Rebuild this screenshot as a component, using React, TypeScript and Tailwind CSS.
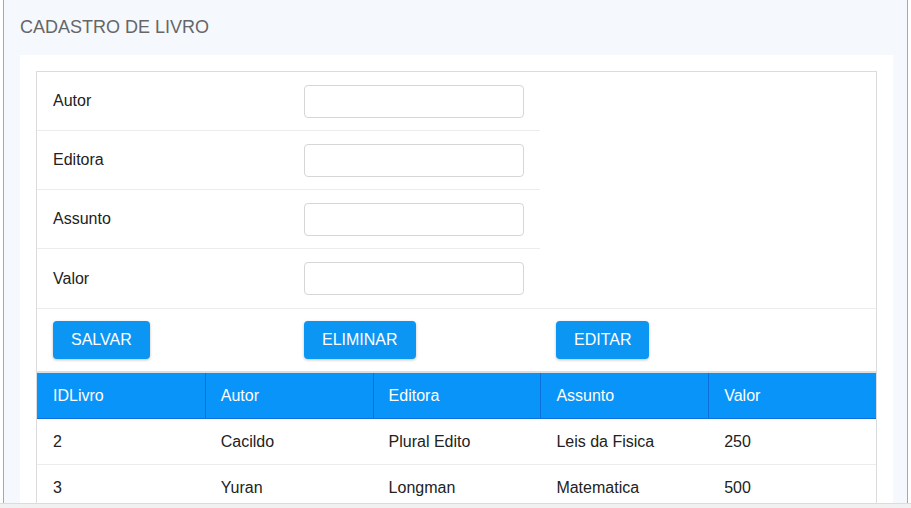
import React from "react";

interface Livro {
  id: number;
  autor: string;
  editora: string;
  assunto: string;
  valor: number;
}

const campos = ["Autor", "Editora", "Assunto", "Valor"];

const livros: Livro[] = [
  { id: 2, autor: "Cacildo", editora: "Plural Edito", assunto: "Leis da Fisica", valor: 250 },
  { id: 3, autor: "Yuran", editora: "Longman", assunto: "Matematica", valor: 500 },
];

const colunas = ["IDLivro", "Autor", "Editora", "Assunto", "Valor"];

const Botao = ({ children }: { children: React.ReactNode }) => (
  <button className="h-[38px] px-[18px] rounded-[4px] bg-[#0b96f3] text-white text-[16px] leading-none uppercase shadow-[0_1px_3px_rgba(0,0,0,0.25)]">
    {children}
  </button>
);

export default function App() {
  return (
    <div
      className="w-[911px] h-[508px] bg-white flex flex-col overflow-hidden"
      style={{ fontFamily: '"Liberation Sans", Arial, sans-serif' }}
    >
      <div className="flex-1 mx-[3px] border-x border-[#a8a8a8] bg-[#f5f9fe] pl-4 pr-[14px] flex flex-col overflow-hidden">
        {/* Title */}
        <div className="h-[55px] flex items-center">
          <h1 className="text-[18px] text-[#666666] uppercase">Cadastro de Livro</h1>
        </div>

        {/* Card */}
        <div className="flex-1 bg-white px-4 pt-4 overflow-hidden">
          <div className="border border-[#dcdcdc]">
            {/* Form */}
            {campos.map((campo, i) => (
              <div
                key={campo}
                className={`flex items-center w-[503px] h-[59px] ${i < campos.length - 1 ? "border-b border-[#ececec]" : ""}`}
              >
                <label className="w-[251px] pl-4 text-[16px] text-[#222]">{campo}</label>
                <div className="pl-4">
                  <input className="block w-[220px] h-[33px] border border-[#d6d6d6] rounded-[4px] bg-white outline-none" />
                </div>
              </div>
            ))}

            {/* Buttons */}
            <div className="flex items-center border-t border-[#ececec] h-[63px]">
              <div className="w-[251px] pl-4">
                <Botao>Salvar</Botao>
              </div>
              <div className="w-[252px] pl-4">
                <Botao>Eliminar</Botao>
              </div>
              <div className="pl-4">
                <Botao>Editar</Botao>
              </div>
            </div>

            {/* Table */}
            <div className="border-t-2 border-[#dedede]">
              <div className="grid grid-cols-5 h-[46px] bg-[#0894f8] border-b border-[#0b6fdc] text-white text-[16px]">
                {colunas.map((c, i) => (
                  <div
                    key={c}
                    className={`flex items-center ${i > 0 ? "border-l border-[#0b6fdc] pl-[15px]" : "pl-4"}`}
                  >
                    {c}
                  </div>
                ))}
              </div>
              {livros.map((l) => (
                <div key={l.id} className="grid grid-cols-5 h-[46px] border-b border-[#ececec] text-[16px] text-[#222]">
                  <div className="flex items-center pl-4">{l.id}</div>
                  <div className="flex items-center pl-4">{l.autor}</div>
                  <div className="flex items-center pl-4">{l.editora}</div>
                  <div className="flex items-center pl-4">{l.assunto}</div>
                  <div className="flex items-center pl-4">{l.valor}</div>
                </div>
              ))}
            </div>
          </div>
        </div>
      </div>
      <div className="h-[5px] border-t border-[#dcdcdc] bg-[#f1f1f1]" />
    </div>
  );
}
